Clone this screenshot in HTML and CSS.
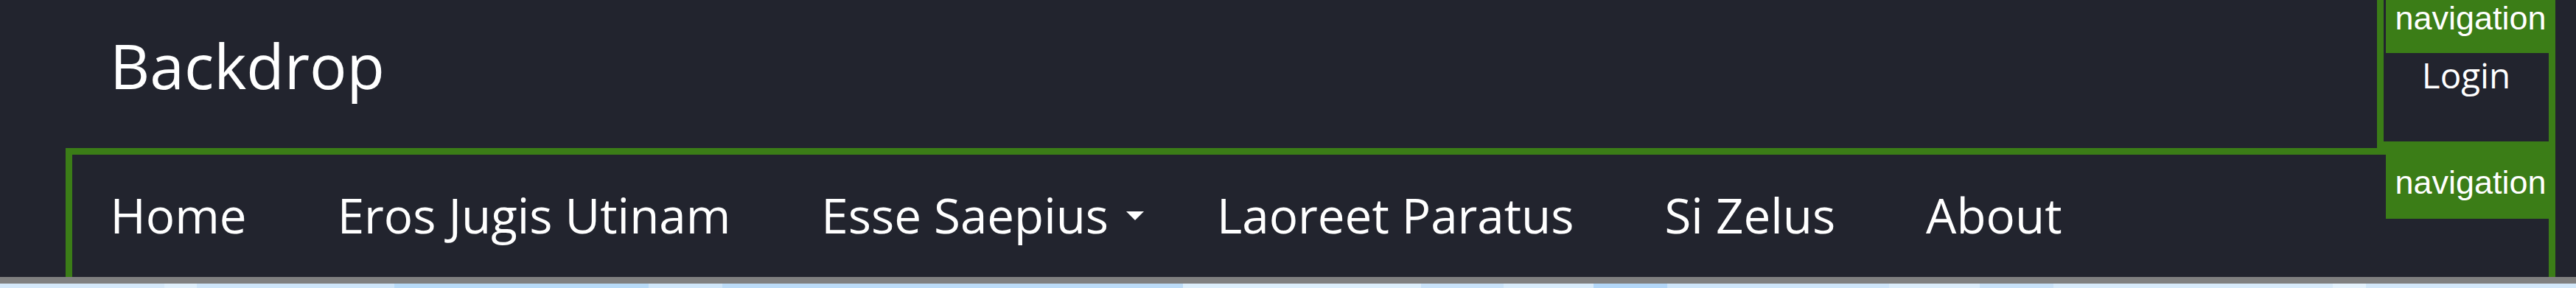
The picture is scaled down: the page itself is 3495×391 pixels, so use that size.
FILE: index.html
```html
<!DOCTYPE html>
<html lang="en">
<head>
<meta charset="utf-8">
<title>Backdrop</title>
<link rel="stylesheet" href="styles.css">
</head>
<body>
<div class="viewport">
  <header class="header">
    <a class="site-name" href="#">Backdrop</a>
    <div class="block block-login">
      <span class="region-label region-label-top">navigation</span>
      <a class="login-link" href="#">Login</a>
    </div>
  </header>
  <nav class="menu-bar">
    <span class="region-label region-label-menu">navigation</span>
    <ul class="menu">
      <li><a href="#">Home</a></li>
      <li><a href="#">Eros Jugis Utinam</a></li>
      <li><a class="has-sub" href="#">Esse Saepius<span class="caret"></span></a></li>
      <li><a href="#">Laoreet Paratus</a></li>
      <li><a href="#">Si Zelus</a></li>
      <li><a href="#">About</a></li>
    </ul>
  </nav>
</div>
<div class="rule"></div>
<div class="hero-strip"></div>
</body>
</html>
```

FILE: styles.css
```css
* { box-sizing: border-box; }
html, body { margin: 0; padding: 0; }
body {
  background: #22242e;
  font-family: "Open Sans", "Liberation Sans", sans-serif;
  color: #fff;
  width: 3495px;
  height: 391px;
  overflow: hidden;
}
.viewport {
  height: 376px;
  overflow: hidden;
}
.header {
  display: flex;
  justify-content: space-between;
  align-items: flex-start;
  height: 201px;
  padding-left: 149px;
  padding-right: 28px;
}
.site-name {
  font-size: 84px;
  line-height: 114px;
  margin-top: 32px;
  color: #fff;
  text-decoration: none;
}
.block-login {
  position: relative;
  width: 242px;
  height: 201px;
  border: 9px solid #3b7d17;
  border-top: 0;
  padding-top: 70px;
  text-align: center;
}
.login-link {
  display: block;
  font-size: 47.5px;
  line-height: 64px;
  color: #fff;
  text-decoration: none;
}
.region-label {
  position: absolute;
  right: -9px;
  width: 230px;
  height: 105px;
  padding-top: 30px;
  background: #3b7d17;
  color: #fff;
  font-family: "Liberation Sans", Arial, sans-serif;
  font-size: 45px;
  line-height: 52px;
  text-align: center;
}
.region-label-top { top: -31px; height: 103px; }
.region-label-menu { top: -18px; }
.menu-bar {
  position: relative;
  margin-left: 89px;
  margin-right: 28px;
  height: 260px;
  border: 9px solid #3b7d17;
  border-bottom: 0;
}
.menu {
  display: flex;
  list-style: none;
  margin: 0 0 0 -10px;
  padding: 34px 0 0 0;
}
.menu a {
  display: block;
  padding: 0 61.5px;
  font-size: 65.5px;
  line-height: 96px;
  color: #fff;
  text-decoration: none;
  white-space: nowrap;
}
.menu a.has-sub { padding-right: 37.5px; }
.caret {
  display: inline-block;
  width: 0;
  height: 0;
  margin-left: 24px;
  margin-bottom: 18px;
  border-left: 12px solid transparent;
  border-right: 12px solid transparent;
  border-top: 12px solid #fff;
}
.rule {
  height: 9px;
  background: #808080;
}
.hero-strip {
  height: 6px;
  background: linear-gradient(90deg,
    #d5e9fa 0, #d5e9fa 223px,
    #e0f0fc 223px, #e0f0fc 267px,
    #cfe6fa 267px, #cfe6fa 535px,
    #b8dbf8 535px, #b8dbf8 880px,
    #d0e7fa 880px, #d0e7fa 980px,
    #bcdcf8 980px, #bcdcf8 1605px,
    #ddeffc 1605px, #ddeffc 1928px,
    #c9e3fa 1928px, #c9e3fa 2040px,
    #d9ecfb 2040px, #d9ecfb 2162px,
    #b3d7f8 2162px, #b3d7f8 2262px,
    #cfe6fa 2262px, #cfe6fa 2563px,
    #dcedfb 2563px, #dcedfb 2686px,
    #c8e2f9 2686px, #c8e2f9 2786px,
    #d8ebfb 2786px, #d8ebfb 3165px,
    #e5f3fd 3165px, #e5f3fd 3210px,
    #d3e8fa 3210px, #d3e8fa 3495px);
}
```
